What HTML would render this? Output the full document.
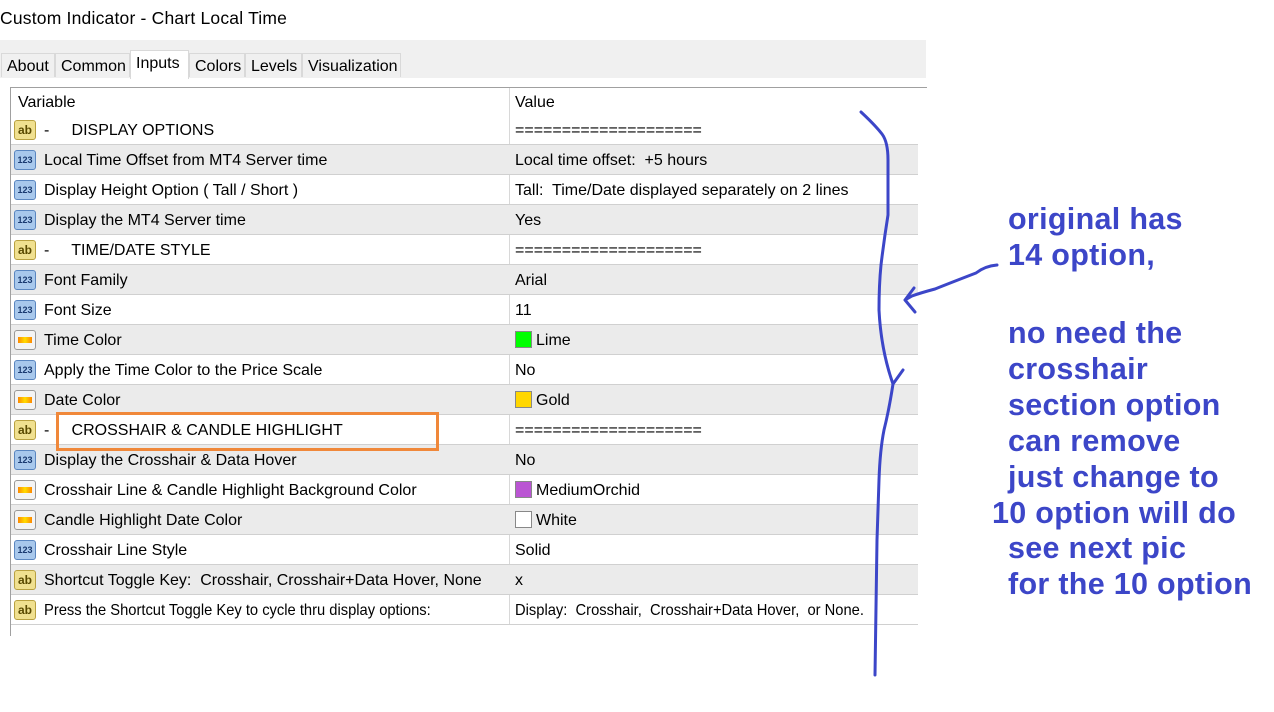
<!DOCTYPE html><html><head><style>
body{margin:0;width:1274px;height:712px;background:#fff;font-family:"Liberation Sans",sans-serif;position:relative;overflow:hidden}
.t{position:absolute;left:0;top:8px;font-size:17.5px;color:#000;letter-spacing:0.2px}
.band{position:absolute;left:0;top:40px;width:926px;height:38px;background:#f0f0f0}
.tab{position:absolute;top:53px;height:24px;border:1px solid #d9d9d9;border-bottom:none;background:#f0f0f0;font-size:16px;line-height:25px;padding:0 5px;box-sizing:border-box}
.tab.a{top:50px;height:29px;background:#fff;border-color:#d9d9d9}
.frame{position:absolute;left:10px;top:87px;width:916px;height:548px;border-left:1px solid #a0a0a0;border-top:1px solid #a0a0a0}
.hdr{position:absolute;left:11px;top:88px;width:915px;height:27px;font-size:16px}
.row{position:absolute;left:11px;width:907px;height:29px;border-bottom:1px solid #d0d0d0;font-size:16px;line-height:31px}
.g{background:#ebebeb}
.c1{position:absolute;left:33px;white-space:nowrap}
.c2{position:absolute;left:504px;white-space:nowrap}
.div{position:absolute;left:509px;top:88px;width:1px;height:537px;background:#d8d8d8}
.ic{position:absolute;left:3px;top:5px;width:22px;height:20px;border-radius:3px;font-size:10px;font-weight:bold;line-height:18px;text-align:center;box-sizing:border-box}
.ab{background:#f0e090;border:1px solid #b8a040;color:#5a4a00;font-size:12px}
.n{background:#a8c8ec;border:1px solid #5a86c0;color:#1a3a70;font-size:9px}
.cl{background:#f4f4f4;border:1px solid #999}
.cl i{position:absolute;left:3px;top:6px;width:14px;height:6px;background:linear-gradient(90deg,#f80,#fd0,#f80)}
.sw{display:inline-block;width:17px;height:17px;vertical-align:-3px;margin-right:4px;box-sizing:border-box;border:1px solid #888}
.an{position:absolute;color:#3c46c8;font-weight:bold;font-size:30.5px;line-height:36px;white-space:nowrap;letter-spacing:0.3px}
</style></head><body>
<div class="t">Custom Indicator - Chart Local Time</div>
<div class="band"></div>
<div class="tab" style="left:1px;width:54px">About</div>
<div class="tab" style="left:55px;width:75px">Common</div>
<div class="tab a" style="left:130px;width:59px">Inputs</div>
<div class="tab" style="left:189px;width:56px">Colors</div>
<div class="tab" style="left:245px;width:57px">Levels</div>
<div class="tab" style="left:302px;width:99px">Visualization</div>
<div class="frame"></div>
<div class="hdr"><span style="position:absolute;left:7px;top:6px">Variable</span><span style="position:absolute;left:504px;top:6px">Value</span></div>
<div class="div"></div>
<div class="row" style="top:115px"><div class="ic ab">ab</div><span class="c1">-&nbsp;&nbsp;&nbsp;&nbsp; DISPLAY OPTIONS</span><span class="c2">====================</span></div>
<div class="row g" style="top:145px"><div class="ic n">123</div><span class="c1">Local Time Offset from MT4 Server time</span><span class="c2">Local time offset:&nbsp; +5 hours</span></div>
<div class="row" style="top:175px"><div class="ic n">123</div><span class="c1">Display Height Option ( Tall / Short )</span><span class="c2">Tall:&nbsp; Time/Date displayed separately on 2 lines</span></div>
<div class="row g" style="top:205px"><div class="ic n">123</div><span class="c1">Display the MT4 Server time</span><span class="c2">Yes</span></div>
<div class="row" style="top:235px"><div class="ic ab">ab</div><span class="c1">-&nbsp;&nbsp;&nbsp;&nbsp; TIME/DATE STYLE</span><span class="c2">====================</span></div>
<div class="row g" style="top:265px"><div class="ic n">123</div><span class="c1">Font Family</span><span class="c2">Arial</span></div>
<div class="row" style="top:295px"><div class="ic n">123</div><span class="c1">Font Size</span><span class="c2">11</span></div>
<div class="row g" style="top:325px"><div class="ic cl"><i></i></div><span class="c1">Time Color</span><span class="c2"><span class="sw" style="background:#0f0"></span>Lime</span></div>
<div class="row" style="top:355px"><div class="ic n">123</div><span class="c1">Apply the Time Color to the Price Scale</span><span class="c2">No</span></div>
<div class="row g" style="top:385px"><div class="ic cl"><i></i></div><span class="c1">Date Color</span><span class="c2"><span class="sw" style="background:#ffd700"></span>Gold</span></div>
<div class="row" style="top:415px"><div class="ic ab">ab</div><span class="c1">-&nbsp;&nbsp;&nbsp;&nbsp; CROSSHAIR &amp; CANDLE HIGHLIGHT</span><span class="c2">====================</span></div>
<div class="row g" style="top:445px"><div class="ic n">123</div><span class="c1">Display the Crosshair &amp; Data Hover</span><span class="c2">No</span></div>
<div class="row" style="top:475px"><div class="ic cl"><i></i></div><span class="c1">Crosshair Line &amp; Candle Highlight Background Color</span><span class="c2"><span class="sw" style="background:#ba55d3"></span>MediumOrchid</span></div>
<div class="row g" style="top:505px"><div class="ic cl"><i></i></div><span class="c1">Candle Highlight Date Color</span><span class="c2"><span class="sw" style="background:#fff"></span>White</span></div>
<div class="row" style="top:535px"><div class="ic n">123</div><span class="c1">Crosshair Line Style</span><span class="c2">Solid</span></div>
<div class="row g" style="top:565px"><div class="ic ab">ab</div><span class="c1">Shortcut Toggle Key:&nbsp; Crosshair, Crosshair+Data Hover, None</span><span class="c2">x</span></div>
<div class="row" style="top:595px"><div class="ic ab">ab</div><span class="c1" style="transform:scaleX(0.92);transform-origin:left">Press the Shortcut Toggle Key to cycle thru display options:</span><span class="c2" style="transform:scaleX(0.92);transform-origin:left">Display:&nbsp; Crosshair,&nbsp; Crosshair+Data Hover,&nbsp; or None.</span></div>
<div style="position:absolute;left:56px;top:412px;width:377px;height:33px;border:3px solid #f0883a"></div>
<svg style="position:absolute;left:0;top:0" width="1274" height="712"><g fill="none" stroke="#3c46c8" stroke-width="3" stroke-linecap="round" stroke-linejoin="round">
<path d="M861 112 Q875 125 882 134 Q888 142 888 160 L888 215 Q884 240 881 265 Q879 285 879 310 Q881 350 893 384 Q889 410 884 430 Q880 450 879 480 L877 540 L875 675"/>
<path d="M893 384 L903 370"/>
<path d="M997 265 Q985 266 976 273 Q950 283 935 289 Q920 293 912 296 L905 300 L915 312 M905 300 L914 288"/>
</g></svg>
<div class="an" style="left:1008px;top:201px">original has<br>14 option,</div>
<div class="an" style="left:1008px;top:315px">no need the<br>crosshair<br>section option<br>can remove<br>just change to</div>
<div class="an" style="left:992px;top:495px">10 option will do</div>
<div class="an" style="left:1008px;top:530px">see next pic<br>for the 10 option</div>
</body></html>
